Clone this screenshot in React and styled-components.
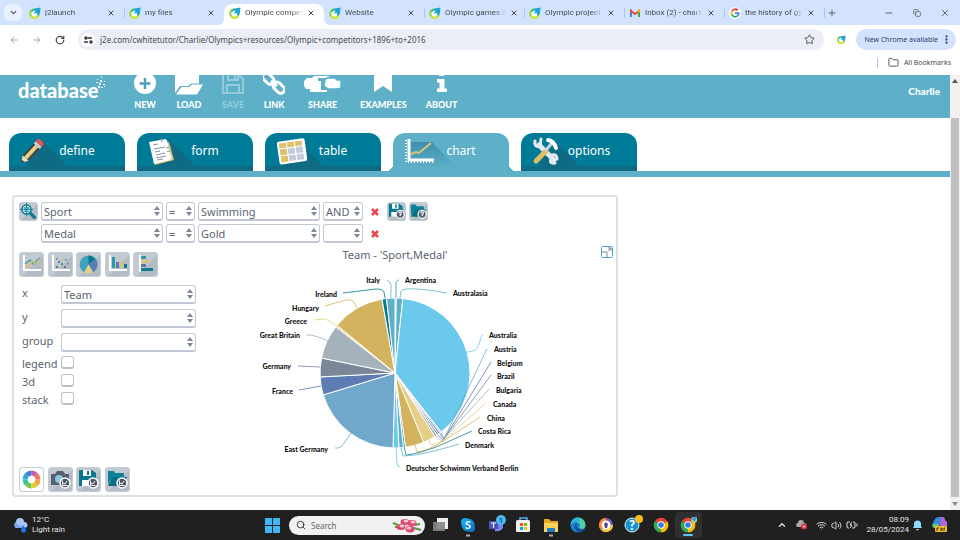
import React from "react";
import styled, { createGlobalStyle } from "styled-components";
import {
  ArrowLeft,
  ArrowRight,
  BatteryCharging,
  ChevronDown,
  ChevronUp,
  Copy,
  EllipsisVertical,
  Folder,
  Minus,
  Plus,
  RotateCw,
  Search,
  Star,
  Volume2,
  Wifi,
  X,
} from "lucide-react";

const ui = `Roboto, "Open Sans", sans-serif`;
const body = `"Noto Sans", "Open Sans", sans-serif`;
const heading = `Lato, "Open Sans", sans-serif`;

const GlobalStyle = createGlobalStyle`
  * { box-sizing: border-box; }
  body { margin: 0; background: #fff; font-family: ${body}; color: #5b6471; }
  button { border: 0; padding: 0; background: none; font: inherit; color: inherit; cursor: pointer; }
  svg { display: block; flex: none; }
`;

const Window = styled.div`
  display: flex;
  flex-direction: column;
  min-height: 100vh;
`;

/* ---------- browser ---------- */

const TabStrip = styled.div`
  display: flex;
  align-items: flex-end;
  height: 25px;
  padding-left: 4px;
  background: #d3e3fd;
  color: #474b50;
  font: 8px ${ui};
`;

const TabSearch = styled.button`
  display: grid;
  place-items: center;
  width: 18px;
  height: 17px;
  margin: 0 2px 4px 0;
  border-radius: 6px;
  background: #e9f1fe;
`;

const BrowserTab = styled.div`
  position: relative;
  display: flex;
  flex: 0 1 100px;
  align-items: center;
  gap: 4px;
  min-width: 0;
  height: 21px;
  padding: 0 9px 4px 5px;
  border-radius: 8px 8px 0 0;
  background: ${(p) => (p.$active ? "#fff" : "transparent")};

  span {
    flex: 1;
    white-space: nowrap;
    mask-image: linear-gradient(90deg, #000 80%, transparent);
  }

  &::before,
  &::after {
    content: "";
    display: ${(p) => (p.$active ? "block" : "none")};
    position: absolute;
    bottom: 0;
    width: 6px;
    height: 6px;
  }
  &::before {
    right: 100%;
    background: radial-gradient(circle at 0 0, transparent 6px, #fff 6px);
  }
  &::after {
    left: 100%;
    background: radial-gradient(circle at 100% 0, transparent 6px, #fff 6px);
  }
`;

const Divider = styled.i`
  width: 1px;
  height: 10px;
  margin: ${(p) => (p.$inBar ? "0 10px 0 0" : "0 -1px 7px 0")};
  background: #a8c7fa;
`;

const WindowButtons = styled.div`
  display: flex;
  gap: 19px;
  align-items: center;
  height: 25px;
  margin-left: ${(p) => (p.$first ? "3px" : "auto")};
  padding-right: 10px;
`;

const AddressBar = styled.div`
  display: flex;
  align-items: center;
  height: 29px;
  padding: 0 4px 0 9px;
  gap: 13px;
  color: #474b50;
`;

const Omnibox = styled.label`
  display: flex;
  flex: 1;
  align-items: center;
  gap: 5px;
  height: 21px;
  padding: 0 9px 0 3px;
  border-radius: 11px;
  background: #eceef7;

  input {
    flex: 1;
    min-width: 0;
    border: 0;
    padding: 0;
    background: none;
    color: #474b50;
    font: 8px ${body};
    outline: none;
  }
`;

const SiteInfo = styled.span`
  display: grid;
  place-items: center;
  width: 14px;
  height: 14px;
  border-radius: 50%;
  background: #fff;
`;

const UpdateButton = styled.button`
  display: flex;
  align-items: center;
  gap: 3px;
  height: 21px;
  margin-left: -3px !important;
  padding: 0 4px 0 8px !important;
  border-radius: 11px;
  background: #d3e3fd !important;
  color: #27406e;
  font: 7px ${body} !important;
  white-space: nowrap;
`;

const BookmarkBar = styled.div`
  display: flex;
  align-items: center;
  justify-content: flex-end;
  height: 21px;
  padding: 0 9px 4px 0;
  font: 7px ${body};
  color: #474b50;

  button {
    display: flex;
    align-items: center;
    gap: 5px;
  }
`;

const Viewport = styled.div`
  display: flex;
  flex: 1;
`;

const Page = styled.div`
  flex: 1;
  min-width: 0;
`;

const Scrollbar = styled.div`
  display: flex;
  flex-direction: column;
  align-items: center;
  width: 10px;
  padding: 4px 0;
  background: #f1f1f1;

  i {
    flex: 1;
    width: 8px;
    margin: 35px 0 5px;
    background: #c1c1c1;
  }
`;

/* ---------- application ---------- */

const AppHeader = styled.header`
  display: flex;
  height: 43px;
  padding: 0 10px 0 18px;
  overflow: hidden;
  background: #5db0c7;
  color: #fff;
`;

const Logo = styled.div`
  display: flex;
  width: 116px;
  height: 30px;
  font: 900 20px/30px ${heading};
`;

const Tools = styled.nav`
  display: flex;
  gap: 19px;
  flex: 1;
`;

const Tool = styled.button`
  display: flex;
  flex-direction: column;
  align-items: center;
  align-self: flex-start;
  gap: 3px;
  font: 900 9px/13px ${heading} !important;
  opacity: ${(p) => (p.disabled ? 0.35 : 1)};
`;

const UserName = styled.span`
  font: 900 10px/32px ${heading};
`;

const Tabs = styled.nav`
  display: flex;
  gap: 12px;
  padding: 15px 9px 0;
  border-bottom: 6px solid #5db0c7;
`;

const Tab = styled.button`
  position: relative;
  display: grid;
  width: 116px;
  height: 38px;
  border-radius: 12px 12px 0 0;
  background: ${(p) =>
    p.$active
      ? "#5db0c7"
      : "linear-gradient(#007b97 33px, #0f6b83 33px)"} !important;
  color: #fff;
  font: 12px/36px ${body} !important;

  > * {
    grid-area: 1 / 1;
  }

  > span {
    padding-left: 20px;
  }

  /* flared feet that join the open tab to the stripe */
  &::before,
  &::after {
    content: "";
    display: ${(p) => (p.$active ? "block" : "none")};
    position: absolute;
    bottom: 0;
    width: 7px;
    height: 7px;
  }
  &::before {
    right: 100%;
    background: radial-gradient(circle at 0 0, transparent 7px, #5db0c7 7px);
  }
  &::after {
    left: 100%;
    background: radial-gradient(circle at 100% 0, transparent 7px, #5db0c7 7px);
  }
`;

const Panel = styled.main`
  display: flex;
  flex-direction: column;
  gap: 3px;
  width: 606px;
  max-width: calc(100% - 26px);
  min-height: 302px;
  margin: 18px 12px 13px;
  padding: 5px 3px 3px 5px;
  border: 2px solid #dce1e8;
  border-radius: 4px;
`;

const FilterRow = styled.div`
  display: flex;
  align-items: center;
  gap: 3px;
  padding-left: ${(p) => (p.$indent ? 22 : 0)}px;
`;

const SelectBox = styled.span`
  display: flex;
  align-items: center;
  width: ${(p) => p.$width}px;
  height: 19px;
  border: 1px solid #c3c9d2;
  border-bottom-width: 2px;
  border-radius: 3px;
  background: #fff;

  select {
    flex: 1;
    min-width: 0;
    height: 100%;
    border: 0;
    padding: 0 0 0 2px;
    appearance: none;
    background: none;
    color: #5b6471;
    font: 11px ${body};
    outline: none;
  }

  svg {
    margin-right: 2px;
    pointer-events: none;
  }
`;

const Remove = styled.button`
  display: grid;
  place-items: center;
  width: 18px;
  height: 18px;
`;

const Tile = styled.button`
  display: grid;
  place-items: center;
  width: ${(p) => p.$size || 25}px;
  height: ${(p) => p.$size || 25}px;
  border-radius: 4px;
  background: ${(p) =>
    p.$plain
      ? "#fff"
      : "linear-gradient(135deg, #c3c9d1 55%, #b3bbc6 55%)"} !important;
  box-shadow: inset 0 0 0 1px #c6ccd4;
`;

const TileRow = styled.div`
  display: flex;
  justify-content: space-between;
  width: ${(p) => p.$width}px;
`;

const Workspace = styled.div`
  display: flex;
  flex: 1;
  align-items: stretch;
`;

const Settings = styled.form`
  display: flex;
  flex-direction: column;
  justify-content: space-between;
  width: 177px;
  padding-top: 6px;
`;

const Fields = styled.div`
  display: grid;
  grid-template-columns: 39px 1fr;
  row-gap: 5px;
  padding: 8px 0 0 3px;
  font-size: 11px;
  line-height: 15px;
`;

const Checks = styled(Fields)`
  row-gap: 3px;
  padding-top: 4px;
`;

const Check = styled.input`
  appearance: none;
  width: 13px;
  height: 13px;
  margin: 0;
  border: 1px solid #bac1cb;
  border-width: 1px 1px 2px;
  border-radius: 3px;
`;

const Figure = styled.figure`
  width: 300px;
  margin: 0 0 0 49px;

  figcaption {
    font-size: 11px;
    line-height: 18px;
    text-align: center;
  }
`;

const Expand = styled.button`
  align-self: flex-start;
  margin-left: auto !important;
`;

/* ---------- taskbar ---------- */

const Taskbar = styled.footer`
  display: flex;
  align-items: center;
  height: 30px;
  padding: 0 12px;
  background: #202020;
  color: #e4e4e4;
  font: 8px/10px ${ui};
`;

const Weather = styled.div`
  display: flex;
  flex: 0 1 253px;
  align-items: center;
  gap: 4px;
`;

const SearchBox = styled.label`
  display: flex;
  align-items: center;
  gap: 5px;
  width: 136px;
  height: 19px;
  margin: 0 2px 0 9px;
  padding: 0 3px 0 7px;
  border-radius: 10px;
  background: #f1f1f1;
  color: #222;

  input {
    flex: 1;
    min-width: 0;
    border: 0;
    padding: 0;
    background: none;
    font: 8px ${body};
    outline: none;
  }
  input::placeholder {
    color: #666;
  }
`;

const Apps = styled.div`
  display: flex;
  width: 275px;
`;

const AppButton = styled.button`
  display: grid;
  flex: 1;
  place-items: center;
  height: 26px;
  border-radius: 4px;
  background: ${(p) => (p.$active ? "#303030" : "none")} !important;
`;

const Tray = styled.div`
  display: flex;
  align-items: center;
  gap: 4px;
  margin-left: auto;

  time {
    text-align: right;
    margin-left: 4px;
  }
`;

/* ---------- small drawings ---------- */

const JIcon = ({ size = 12 }) => (
  <svg width={size} height={size} viewBox="0 0 12 12">
    <circle cx="5.5" cy="6.5" r="4.2" fill="#fff" stroke="#8ed32b" strokeWidth="2" />
    <path d="M2 9.5A4.2 4.2 0 0 0 9 9" fill="none" stroke="#d6e53a" strokeWidth="2" />
    <path d="M3 3 6 1.5 11.5.5 11 6 9 9 7.5 6 4.5 6.5 6.5 4Z" fill="#1fa5dc" />
    <path d="M1 4 5 2 4 5Z" fill="#3dbd8f" />
  </svg>
);

const GmailIcon = () => (
  <svg width="12" height="12" viewBox="0 0 12 12">
    <path d="M1 2.5h2V10H1Z" fill="#4285f4" />
    <path d="M9 2.5h2V10H9Z" fill="#34a853" />
    <path d="m1 2 5 4 5-4v2.5L6 8.3 1 4.5Z" fill="#ea4335" />
    <path d="M9 3.6 11 2v2.5L9 6Z" fill="#fbbc04" />
  </svg>
);

const GoogleIcon = () => (
  <svg width="12" height="12" viewBox="0 0 12 12">
    <circle cx="6" cy="6" r="6" fill="#fff" />
    <g fill="none" strokeWidth="1.8">
      <path d="M8.8 3.4A3.7 3.7 0 0 0 2.7 4.5" stroke="#ea4335" />
      <path d="M2.7 4.5a3.7 3.7 0 0 0 0 3" stroke="#fbbc04" />
      <path d="M2.7 7.5a3.7 3.7 0 0 0 5.8 1.4" stroke="#34a853" />
      <path d="M8.5 8.9A3.7 3.7 0 0 0 9.7 6.2H6" stroke="#4285f4" />
    </g>
  </svg>
);

const Arrows = () => (
  <svg width="6" height="12" viewBox="0 0 6 12" fill="#7d8795">
    <path d="M3 1 6 5H0ZM0 7h6l-3 4Z" />
  </svg>
);

const toolIcons = {
  NEW: (
    <svg width="22" height="20" viewBox="0 0 22 20">
      <circle cx="11" cy="8" r="11" fill="#fff" />
      <path d="M11 3v11M5.5 8.5h11" stroke="#4f9fb6" strokeWidth="2.5" />
    </svg>
  ),
  LOAD: (
    <svg width="28" height="20" viewBox="0 0 28 20" fill="#fff">
      <path d="M0 0h24v8.5h-8l-3 2.5H5L0 18Z" />
      <path d="M1 19.5 6.5 12H14l3-2.5h11L22 19.5Z" />
    </svg>
  ),
  SAVE: (
    <svg width="22" height="20" viewBox="0 0 22 20" fill="none" stroke="#fff" strokeWidth="2">
      <path d="M1 0v18h20V4l-4-4M5 18v-8h12v8M6 0v5h10V0M13 0v4" />
    </svg>
  ),
  LINK: (
    <svg width="22" height="20" viewBox="0 0 22 20" fill="none" stroke="#fff" strokeWidth="3">
      <rect x="-1" y="0" width="13" height="7.5" rx="3.7" transform="rotate(45 5.5 3.5)" />
      <rect x="9.5" y="9" width="13" height="7.5" rx="3.7" transform="rotate(45 16 12.5)" />
      <path d="m8 6 6 5" />
    </svg>
  ),
  SHARE: (
    <svg width="37" height="20" viewBox="0 0 37 20" fill="#fff">
      <path d="M0 6 3 3h5l2-2h16l-4 2h-8v3h3v9h6v2H6v-3H2l-2-3Z" />
      <path d="M23 3h8l2 2h4v8l-4 1h-9l-4-3 1-6Z" stroke="#5db0c7" strokeWidth="1.5" />
    </svg>
  ),
  EXAMPLES: (
    <svg width="18" height="20" viewBox="0 0 18 20" fill="#fff">
      <path d="M0 0h18v17l-9-6-9 6Z" />
    </svg>
  ),
  ABOUT: (
    <svg width="10" height="20" viewBox="0 0 10 20" fill="#fff">
      <path d="M2 0h5v1H2ZM0 4h7.5v9.5H10V17H0v-3.5h2.5V7.5H0Z" />
    </svg>
  ),
};

const TabArt = ({ children, fade }) => (
  <svg width="116" height="38" viewBox="0 0 116 38">
    <defs>
      <linearGradient id="fade" x1="0" y1="0" x2="0" y2="1">
        <stop offset="0" stopColor="#3e8fad" />
        <stop offset="1" stopColor="#5db0c7" />
      </linearGradient>
    </defs>
    <path
      d={fade ? "M15 9h24l25 26H29L14 25Z" : "M35 9 63 38H24L18 30Z"}
      fill={fade ? "url(#fade)" : "#0f6b83"}
    />
    {children}
  </svg>
);

const tabs = [
  {
    label: "define",
    art: (
      <g transform="translate(12 30) rotate(-47)">
        <path d="M0 0 7-4v8Z" fill="#f4ddb4" />
        <path d="M0 0 3-2v4Z" fill="#333" />
        <path d="M7-4h17v3H7Z" fill="#3d3d45" />
        <path d="M7-2h17v4H7Z" fill="#ead083" />
        <path d="M7 2h17v2H7Z" fill="#4b4340" />
        <path d="M23-4h3v8h-3Z" fill="#c7ccd2" />
        <path d="M26-4h3q3 4 0 8h-3Z" fill="#e95159" />
      </g>
    ),
  },
  {
    label: "form",
    art: (
      <g>
        <path d="m18 12 14-3 5 18-19 5Z" fill="#ddbd69" />
        <path d="m15 10 15-3 5 19-16 4Z" fill="#e8edf2" />
        <path d="m12 9 17-3 5 21-17 4Z" fill="#fff" />
        <path
          d="m16 12 5-1m-4 5 11-2m-10 5 5-1m-4 4 9-2m-9 5 10-2m-9 4 6-1m3-11 3-.5m-2 4 3-.5M24 5l1 4"
          stroke="#84929f"
        />
      </g>
    ),
  },
  {
    label: "table",
    art: (
      <g transform="rotate(-8 26 18)">
        <rect x="13" y="7" width="28" height="23" rx="2" fill="#fff" />
        <path d="M15 9h7v5h-7Zm8 0h7v5h-7Zm8 0h7v5h-7ZM15 15h7v6h-7Zm0 7h7v6h-7Z" fill="#dfc06b" />
        <path d="M23 15h7v6h-7Zm8 0h7v6h-7Zm-8 7h7v6h-7Zm8 0h7v6h-7Z" fill="#c4ccd9" />
      </g>
    ),
  },
  {
    label: "chart",
    active: true,
    art: (
      <g fill="none">
        <path d="M16 6v21h25" stroke="#fff" strokeWidth="3" />
        <path d="M13 7v22h28" stroke="#fff" strokeWidth="2" strokeDasharray="1 2" />
        <path d="m18 21 5-2 3 1 12-10" stroke="#dfc478" strokeWidth="2" />
      </g>
    ),
  },
  {
    label: "options",
    art: (
      <g fill="none" strokeLinecap="round">
        <path d="m18 12 15 15" stroke="#e3eaf2" strokeWidth="5" />
        <path d="M14 8q-1 7 6 5-1-3 0-7M30 26q-2 5 4 4m-3-8q5-1 5 4" stroke="#e3eaf2" strokeWidth="3" />
        <path d="M15 28 25 18" stroke="#dfbd62" strokeWidth="5" />
        <path d="m25 17 6-7" stroke="#cdd5df" strokeWidth="3" />
        <path d="M27 7q6 1 8 8" stroke="#fff" strokeWidth="4" />
      </g>
    ),
  },
];

const axes = <path d="M3 1v15h17" fill="none" stroke="#fff" strokeWidth="2" />;

const TileSvg = ({ size = 21, children }) => (
  <svg width={size} height={size} viewBox="0 0 21 21">
    {children}
  </svg>
);

const chartTypes = [
  {
    name: "line chart",
    art: (
      <>
        {axes}
        <path d="m4 10 5-4 3 4 7-6" fill="none" stroke="#2f9db3" strokeWidth="1.5" />
        <path d="m4 13 4-1 3-5 3 3 5-5" fill="none" stroke="#d8bd66" strokeWidth="1.5" />
      </>
    ),
  },
  {
    name: "scatter chart",
    art: (
      <>
        {axes}
        <path d="M6 4h1.5v1.5H6Zm5 5h2v2h-2Zm4-4h1.5v1.5H15Zm-9 7h2v2H6Z" fill="#2a8fa7" />
        <path d="M8 7h2v2H8Zm6 5h2v2h-2Zm3-3h1.5v1.5H17Z" fill="#5c76b0" />
        <path d="M12 5h1.5v1.5H12Zm-2 7h1.5v1.5H10Zm8 1h1.5v1.5H18Z" fill="#d8bd66" />
      </>
    ),
  },
  {
    name: "pie chart",
    art: (
      <>
        <circle cx="10.5" cy="10.5" r="9" fill="#3fa3bd" />
        <path d="M10.5 10.5v-9a9 9 0 0 1 7 3.5Z" fill="#08788f" />
        <path d="m10.5 10.5 7-5.5a9 9 0 0 1-2 13Z" fill="#5a7cb6" />
        <path d="m10.5 10.5 4.5 7.5a9 9 0 0 1-9 .5Z" fill="#e5d083" />
      </>
    ),
  },
  {
    name: "column chart",
    art: (
      <>
        {axes}
        <path d="M5 3h3v11H5Z" fill="#2a96b0" />
        <path d="M9 8h3v6H9Z" fill="#5c76b0" />
        <path d="M13 7h3v7h-3Z" fill="#dcc472" />
        <path d="M17 10h3v4h-3Z" fill="#0b7d95" />
      </>
    ),
  },
  {
    name: "bar chart",
    art: (
      <>
        <path d="M5 1v17" stroke="#fff" strokeWidth="2" />
        <path d="M6 2h5v3H6Z" fill="#2a96b0" />
        <path d="M6 6h8v3H6Z" fill="#dcc472" />
        <path d="M6 10h5v3H6Z" fill="#5c76b0" />
        <path d="M6 14h12v3H6Z" fill="#0b7d95" />
      </>
    ),
  },
];

const badge = (query) => (
  <>
    <circle cx="15" cy="14" r="5" fill="#4b5766" stroke="#fff" strokeWidth="1.5" />
    {query ? (
      <path d="M13.5 13q0-2 1.5-2t1.5 1.5-1.5 2v2" fill="none" stroke="#fff" strokeWidth="1.5" />
    ) : (
      <path d="M12.5 11.5v5h5M13 14l2 1 2-3" fill="none" stroke="#fff" />
    )}
  </>
);

const Disk = ({ query, size }) => (
  <TileSvg size={size}>
    <path d="M1 1h13l4 3v13H1Z" fill="#08788f" />
    <path d="M5 1h8v6H5ZM4 11h11v6H4Z" fill="#fff" />
    <path d="M9 2h2v4H9Z" fill="#08788f" />
    {badge(query)}
  </TileSvg>
);

const OpenFolder = ({ query, size }) => (
  <TileSvg size={size}>
    <path d="M1 2h6l1 2h9v5H5l-4 6Z" fill="#0c8199" />
    <path d="M5 8h15l-4 9H1Z" fill="#086f87" />
    {badge(query)}
  </TileSvg>
);

const ringColours = ["#f0a63c", "#f7764f", "#c35db0", "#4a78d0", "#31a7dc", "#3cbf9c", "#78c74b", "#e3cb3c"];

const exportTools = [
  {
    name: "colours",
    plain: true,
    art: (
      <TileSvg>
        <g fill="none" strokeWidth="5">
          {ringColours.map((colour, i) => (
            <path
              key={colour}
              d="M16.9 10.5a6.4 6.4 0 0 1-1.9 4.6"
              stroke={colour}
              transform={`rotate(${i * -45} 10.5 10.5)`}
            />
          ))}
        </g>
      </TileSvg>
    ),
  },
  {
    name: "take picture",
    art: (
      <TileSvg>
        <path d="M1 5h4l2-3h6l2 3h4v11H1Z" fill="#566170" />
        <circle cx="9" cy="10" r="4" fill="#8cc7df" />
        {badge()}
      </TileSvg>
    ),
  },
  { name: "save chart", art: <Disk /> },
  { name: "open chart", art: <OpenFolder /> },
];

/* ---------- pie chart ---------- */

// from/to are degrees clockwise from twelve o'clock, the pie centre is 0,0
const slices = [
  { name: "Argentina", from: 0, to: 1, fill: "#2f97a8", x: 10, y: -92, line: "M1-75V-88Q1-93 4-93" },
  { name: "Australasia", from: 1, to: 6, fill: "#5db0c7", x: 58, y: -79, line: "M5-75 6-82Q7-84 12-84 25-85 52-80" },
  { name: "Australia", from: 6, to: 142, fill: "#6bc9ec", x: 94, y: -37, line: "M72-21C82-22 83-25 85-32Q86-38 88-38" },
  { name: "Austria", from: 142, to: 143, fill: "#6fa8ca", x: 99, y: -23, line: "M46 60 49 66 92-24" },
  { name: "Belgium", from: 143, to: 144.5, fill: "#5d7cb3", x: 102, y: -9, line: "M45 61 49 66 96-11" },
  { name: "Brazil", from: 144.5, to: 146, fill: "#7b8699", x: 102, y: 4, line: "M43 62 48 67 96 2" },
  { name: "Bulgaria", from: 146, to: 148, fill: "#a5b1bb", x: 101, y: 18, line: "M41 63 47 68 94 16" },
  { name: "Canada", from: 148, to: 157.5, fill: "#e5cf87", x: 98, y: 32, line: "M34 67 36 72 48 68 91 30" },
  { name: "China", from: 157.5, to: 172, fill: "#d3b35d", x: 92, y: 46, line: "M20 72 22 79Q35 77 50 67L85 44" },
  { name: "Costa Rica", from: 172, to: 173.5, fill: "#218393", x: 83, y: 59, line: "M9 74 11 82Q28 80 48 71L77 58" },
  { name: "Denmark", from: 173.5, to: 177, fill: "#5db0c7", x: 70, y: 73, line: "M6 75 8 83Q25 83 64 71" },
  {
    name: "Deutscher Schwimm Verband Berlin",
    from: 177,
    to: 181.5,
    fill: "#6bc9ec",
    x: 11,
    y: 96,
    line: "M1 75 2 90Q2 94 5 94",
  },
  { name: "East Germany", from: 181.5, to: 253, fill: "#6fa8ca", x: -67, y: 77, line: "M-44 60-51 70Q-54 76-60 75" },
  { name: "France", from: 253, to: 267, fill: "#5d7cb3", x: -102, y: 19, line: "M-74 13-96 17" },
  { name: "Germany", from: 267, to: 281.5, fill: "#7b8699", x: -104, y: -6, line: "M-75-6-97-7" },
  { name: "Great Britain", from: 281.5, to: 308, fill: "#a5b1bb", x: -95, y: -37, line: "M-67-32Q-82-39-89-38" },
  { name: "Greece", from: 308, to: 309.5, fill: "#e5cf87", x: -88, y: -51, line: "M-58-47Q-67-54-72-54L-81-53" },
  { name: "Hungary", from: 309.5, to: 350, fill: "#d3b35d", x: -76, y: -64, line: "M-38-65-41-71Q-43-74-49-73L-70-67" },
  { name: "Ireland", from: 350, to: 353.5, fill: "#087b92", x: -58, y: -78, line: "M-10-75-11-81Q-12-84-19-84L-52-80" },
  { name: "Italy", from: 353.5, to: 360, fill: "#5db0c7", x: -15, y: -92, line: "M-4-75V-88Q-5-92-8-93" },
];

const radius = 75;
const edge = (deg) => {
  const a = (deg * Math.PI) / 180;
  return `${radius * Math.sin(a)} ${-radius * Math.cos(a)}`;
};

const Leader = styled.path`
  fill: none;
  stroke-width: 1;
  opacity: 0.8;
`;

const SliceLabel = styled.text`
  fill: #111;
  font: 900 7px ${heading};
`;

const Pie = () => (
  <svg width="300" height="216" viewBox="-150 -109 300 216" role="img" aria-label="Gold swimming medals by team">
    {slices.map((s) => (
      <path
        key={s.name}
        d={`M0 0 ${edge(s.from)}A${radius} ${radius} 0 ${s.to - s.from > 180 ? 1 : 0} 1 ${edge(s.to)}Z`}
        fill={s.fill}
        stroke="#fff"
        strokeWidth="1"
      />
    ))}
    {slices.map((s) => (
      <g key={s.name}>
        <Leader d={s.line} stroke={s.fill} />
        <SliceLabel x={s.x} y={s.y} dy="2" textAnchor={s.x < 0 ? "end" : "start"}>
          {s.name}
        </SliceLabel>
      </g>
    ))}
  </svg>
);

/* ---------- taskbar drawings ---------- */

const ChromeIcon = ({ badge: withBadge }) => (
  <svg width="20" height="22" viewBox="-10 -11 20 22">
    <path d="M0 0-6.3-3.7A7.3 7.3 0 0 1 6.3-3.7Z" fill="#ea4335" />
    <path d="M0 0 6.3-3.7A7.3 7.3 0 0 1 0 7.3Z" fill="#fbbc04" />
    <path d="M0 0 0 7.3A7.3 7.3 0 0 1-6.3-3.7Z" fill="#34a853" />
    <circle r="3.7" fill="#fff" />
    <circle r="2.8" fill="#2f7de9" />
    {withBadge && (
      <>
        <circle cx="6" cy="-5" r="3" fill="#b5dc84" />
        <path d="m3-6 6-3-2 6Z" fill="#25a8db" />
        <rect x="-5" y="9" width="10" height="2" rx="1" fill="#5cc3f5" />
      </>
    )}
  </svg>
);

const AppSvg = ({ children }) => (
  <svg width="22" height="24" viewBox="-11 -12 22 24">
    {children}
  </svg>
);

const apps = [
  {
    name: "Task view",
    art: (
      <AppSvg>
        <path d="M-4-7H7V4H-4Z" fill="#eee" />
        <path d="M-8-3H4V6H-8Z" fill="#858585" opacity=".9" />
      </AppSvg>
    ),
  },
  {
    name: "Skype",
    art: (
      <AppSvg>
        <circle r="6.5" fill="#0f93dc" />
        <circle cx="-3" cy="-3" r="4" fill="#17a6e8" />
        <circle cx="3" cy="3" r="4" fill="#0879cd" />
        <text y="4" textAnchor="middle" fontSize="11" fontWeight="700" fontFamily="Lato" fill="#fff">
          S
        </text>
        <path d="M-2 10.5H2" stroke="#aaa" strokeWidth="2" />
      </AppSvg>
    ),
  },
  {
    name: "Teams",
    art: (
      <AppSvg>
        <path d="M-2-3H7V3Q4 7-1 6Z" fill="#7b83eb" />
        <path d="M-7-4H2V4H-7Z" fill="#4b53bc" />
        <path d="M-5-2H0M-2.5-2V3" stroke="#fff" />
        <circle cx="5" cy="-5" r="5" fill="#4cb8f2" />
        <text x="5" y="-2" textAnchor="middle" fontSize="8" fontFamily="Open Sans" fill="#111">
          1
        </text>
      </AppSvg>
    ),
  },
  {
    name: "Store",
    art: (
      <AppSvg>
        <path d="M-3-4V-7H4V-4" fill="none" stroke="#4bb4ea" strokeWidth="1.5" />
        <rect x="-7" y="-5" width="14" height="12" rx="1.5" fill="#f2f2f2" />
        <path d="M-3-2H0V1H-3Z" fill="#f25022" />
        <path d="M1-2H4V1H1Z" fill="#7fba00" />
        <path d="M-3 2H0V5H-3Z" fill="#00a4ef" />
        <path d="M1 2H4V5H1Z" fill="#ffb900" />
      </AppSvg>
    ),
  },
  {
    name: "File explorer",
    art: (
      <AppSvg>
        <path d="M-7-6H-2L0-4H7V6H-7Z" fill="#e8a91f" />
        <path d="M-7-2H7V7H-7Z" fill="#fdd25b" />
        <path d="M-4 3H4V7H-4Z" fill="#1d7fc8" />
        <path d="M-2 10.5H2" stroke="#aaa" strokeWidth="2" />
      </AppSvg>
    ),
  },
  {
    name: "Edge",
    art: (
      <AppSvg>
        <circle r="7.5" fill="#1b86d0" />
        <path d="M-7.5 0A7.5 7.5 0 0 1 7.5 0Q7.5 4 3 4 0 3 2 1 2-3-2-3-6-3-7.5 0Z" fill="#4fd0a0" />
        <path d="M-7.5 0A7.5 7.5 0 0 1 0-7.5Q3-5 1-3-5-4-7.5 0Z" fill="#2fb4dd" />
        <path d="M-3-1Q-5 5 1 7.4 5 7 7 4 1 5-1 2-2 0-1-2Z" fill="#0f539c" />
      </AppSvg>
    ),
  },
  {
    name: "Privacy browser",
    art: (
      <AppSvg>
        <circle r="7" fill="#7857c9" />
        <path d="M0-7A7 7 0 0 0-5 5L0 0Z" fill="#f58a2c" />
        <path d="M-5 5A7 7 0 0 0 7 0L0 0Z" fill="#f9c53a" />
        <circle r="4.5" fill="#fff" />
        <path d="M0-3 2-1 1 3H-1L-2-1Z" fill="#58418f" />
      </AppSvg>
    ),
  },
  {
    name: "Help",
    art: (
      <AppSvg>
        <circle r="7" cx="-1" fill="#1695cd" stroke="#e5f5fb" />
        <text x="-1" y="5" textAnchor="middle" fontSize="13" fontWeight="900" fontFamily="Lato" fill="#fff">
          ?
        </text>
        <circle cx="6" cy="-6" r="4" fill="#fbbc1c" />
      </AppSvg>
    ),
  },
  { name: "Chrome", art: <ChromeIcon /> },
  { name: "Chrome, j2e", active: true, art: <ChromeIcon badge /> },
];

const Tulips = () => (
  <svg width="30" height="17" viewBox="0 0 30 17">
    <path d="m1 6 5 2M3 10l5 0M22 8l6-1M22 11l7 2" stroke="#4d9c3a" strokeWidth="2" />
    <g fill="#dd4470">
      <ellipse cx="9" cy="10" rx="4.5" ry="3" />
      <ellipse cx="13" cy="5" rx="4.5" ry="3" />
      <ellipse cx="18" cy="12" rx="4.5" ry="3.5" />
      <ellipse cx="20" cy="6" rx="4.5" ry="3" />
    </g>
    <g fill="#f7c3cf">
      <ellipse cx="10" cy="9" rx="2.5" ry="1.5" />
      <ellipse cx="14" cy="4" rx="2.5" ry="1.5" />
      <ellipse cx="17" cy="11" rx="2.5" ry="1.5" />
      <ellipse cx="21" cy="5" rx="2.5" ry="1.5" />
    </g>
  </svg>
);

const browserTabs = [
  ["j2launch"],
  ["my files"],
  ["Olympic compet", true],
  ["Website"],
  ["Olympic games a"],
  ["Olympic project"],
  ["Inbox (2) - charli"],
  ["the history of gy"],
];

const Filter = ({ first, field, value, join }) => (
  <FilterRow $indent={!first}>
    {first && (
      <Tile $size={19} aria-label="search">
        <TileSvg size={17}>
          <path d="m12 12 7 7" stroke="#08788f" strokeWidth="4" />
          <circle cx="8" cy="8" r="5.5" fill="#fff" stroke="#08788f" strokeWidth="2" />
          <path d="M8 0v16M0 8h16M5 6h6M5 10h6" stroke="#1f8ba1" strokeWidth="1.5" />
        </TileSvg>
      </Tile>
    )}
    {[
      ["field", field, 122],
      ["comparison", "=", 29],
      ["value", value, 122],
      ["join", join, 40],
    ].map(([name, text, width]) => (
      <SelectBox key={name} $width={width}>
        <select aria-label={name}>
          <option>{text}</option>
        </select>
        <Arrows />
      </SelectBox>
    ))}
    <Remove aria-label="remove">
      <svg width="8" height="8" viewBox="0 0 8 8">
        <path d="m1 1 6 6m0-6L1 7" stroke="#e9494d" strokeWidth="2.5" />
      </svg>
    </Remove>
    {first && (
      <>
        <Tile $size={19} aria-label="save query">
          <Disk query size={17} />
        </Tile>
        <Tile $size={19} aria-label="open query">
          <OpenFolder query size={17} />
        </Tile>
      </>
    )}
  </FilterRow>
);

export default function App() {
  return (
    <Window>
      <GlobalStyle />

      <TabStrip>
        <TabSearch aria-label="search tabs">
          <ChevronDown size={9} strokeWidth={3} />
        </TabSearch>
        {browserTabs.map(([title, active], i) => (
          <React.Fragment key={title}>
            <BrowserTab $active={active}>
              {i === 6 ? <GmailIcon /> : i === 7 ? <GoogleIcon /> : <JIcon />}
              <span>{title}</span>
              <X size={8} strokeWidth={3} />
            </BrowserTab>
            {i !== 1 && i !== 2 && <Divider />}
          </React.Fragment>
        ))}
        <WindowButtons $first>
          <Plus size={10} strokeWidth={2} />
        </WindowButtons>
        <WindowButtons>
          <Minus size={10} />
          <Copy size={8} style={{ transform: "scaleX(-1) rotate(90deg)" }} />
          <X size={10} />
        </WindowButtons>
      </TabStrip>

      <AddressBar>
        <ArrowLeft size={10} color="#999" />
        <ArrowRight size={10} color="#999" />
        <RotateCw size={10} strokeWidth={3} />
        <Omnibox>
          <SiteInfo>
            <svg width="9" height="8" viewBox="0 0 9 8" fill="none" stroke="#333" strokeWidth="1.5">
              <path d="M4 2h4M0 6h4" />
              <circle cx="2" cy="2" r="1" />
              <circle cx="7" cy="6" r="1" />
            </svg>
          </SiteInfo>
          <input
            aria-label="address"
            defaultValue="j2e.com/cwhitetutor/Charlie/Olympics+resources/Olympic+competitors+1896+to+2016"
          />
          <Star size={11} strokeWidth={2} />
        </Omnibox>
        <JIcon size={9} />
        <UpdateButton>
          New Chrome available
          <EllipsisVertical size={11} strokeWidth={3} />
        </UpdateButton>
      </AddressBar>

      <BookmarkBar>
        <Divider $inBar />
        <button>
          <Folder size={11} />
          All Bookmarks
        </button>
      </BookmarkBar>

      <Viewport>
        <Page>
          <AppHeader>
            <Logo>
              database
              <svg width="14" height="14" viewBox="0 0 14 14" fill="#fff" style={{ margin: "2px 0 0 -7px" }}>
                <path d="M5 2h1v1H5Zm4-2h1v1H9ZM4 5h2v1H4Zm4-2h2v2H8Zm4 1h1v1h-1ZM7 6h2v2H7Zm4 1h2v1h-2ZM9 10h2v1H9Zm3-1h1v1h-1ZM6 9h2v2H6Z" />
              </svg>
            </Logo>
            <Tools>
              {Object.keys(toolIcons).map((name) => (
                <Tool key={name} disabled={name === "SAVE"}>
                  {toolIcons[name]}
                  {name}
                </Tool>
              ))}
            </Tools>
            <UserName>Charlie</UserName>
          </AppHeader>

          <Tabs>
            {tabs.map((tab) => (
              <Tab key={tab.label} $active={tab.active}>
                <TabArt fade={tab.active}>{tab.art}</TabArt>
                <span>{tab.label}</span>
              </Tab>
            ))}
          </Tabs>

          <Panel>
            <Filter first field="Sport" value="Swimming" join="AND" />
            <Filter field="Medal" value="Gold" join="" />

            <Workspace>
              <Settings>
                <div>
                  <TileRow $width={139}>
                    {chartTypes.map((type) => (
                      <Tile type="button" key={type.name} aria-label={type.name}>
                        <TileSvg>{type.art}</TileSvg>
                      </Tile>
                    ))}
                  </TileRow>
                  <Fields>
                    {[["x", "Team"], ["y", ""], ["group", ""]].map(([name, value]) => (
                      <React.Fragment key={name}>
                        <label htmlFor={name}>{name}</label>
                        <SelectBox $width={135}>
                          <select id={name}>
                            <option>{value}</option>
                          </select>
                          <Arrows />
                        </SelectBox>
                      </React.Fragment>
                    ))}
                  </Fields>
                  <Checks>
                    {["legend", "3d", "stack"].map((name) => (
                      <React.Fragment key={name}>
                        <label htmlFor={name}>{name}</label>
                        <Check type="checkbox" id={name} />
                      </React.Fragment>
                    ))}
                  </Checks>
                </div>
                <TileRow $width={111}>
                  {exportTools.map((tool) => (
                    <Tile type="button" key={tool.name} $plain={tool.plain} aria-label={tool.name}>
                      {tool.art}
                    </Tile>
                  ))}
                </TileRow>
              </Settings>

              <Figure>
                <figcaption>Team - 'Sport,Medal'</figcaption>
                <Pie />
              </Figure>

              <Expand aria-label="expand">
                <svg width="12" height="12" viewBox="0 0 12 12" fill="none">
                  <rect x=".5" y=".5" width="11" height="11" rx="1" stroke="#4ba5bc" />
                  <path d="M1 6h5v5M7 5l3-3M7 2h3v3" stroke="#7b8794" />
                </svg>
              </Expand>
            </Workspace>
          </Panel>
        </Page>

        <Scrollbar>
          <svg width="6" height="4" viewBox="0 0 6 4" fill="#555">
            <path d="m3 0 3 4H0Z" />
          </svg>
          <i />
          <svg width="6" height="4" viewBox="0 0 6 4" fill="#888">
            <path d="M0 0h6L3 4Z" />
          </svg>
        </Scrollbar>
      </Viewport>

      <Taskbar>
        <Weather>
          <svg width="16" height="15" viewBox="0 0 16 15">
            <path d="M4 10a3.5 3.5 0 0 1 0-6 4 4 0 0 1 8 0 3 3 0 0 1 1 6Z" fill="#a9c5f7" />
            <path d="M4 10a3 3 0 0 1 0-5q5 4 9 5Z" fill="#7da4ee" />
            <path d="M11 7q6 7 0 7.5-4-.5 0-7.5Z" fill="#1d76ea" />
          </svg>
          <div>
            12°C
            <br />
            Light rain
          </div>
        </Weather>
        <button aria-label="Start">
          <svg width="15" height="15" viewBox="0 0 15 15" fill="#3fb7f5">
            <path d="M0 0h7v7H0Zm8 0h7v7H8ZM0 8h7v7H0Zm8 0h7v7H8Z" />
          </svg>
        </button>
        <SearchBox>
          <Search size={10} strokeWidth={2} />
          <input placeholder="Search" aria-label="Search" />
          <Tulips />
        </SearchBox>
        <Apps>
          {apps.map((app) => (
            <AppButton key={app.name} $active={app.active} aria-label={app.name}>
              {app.art}
            </AppButton>
          ))}
        </Apps>
        <Tray>
          <ChevronUp size={10} strokeWidth={3} style={{ marginRight: 5 }} />
          <svg width="12" height="10" viewBox="0 0 12 10">
            <path d="M2 7a2 2 0 0 1 0-4 3 3 0 0 1 6 0 2 2 0 0 1 1 4Z" fill="#aaa" />
            <circle cx="8" cy="6.5" r="3" fill="#d92c36" />
            <path d="m7 5.5 2 2m0-2-2 2" stroke="#fff" />
          </svg>
          <Wifi size={11} style={{ marginLeft: 4 }} />
          <Volume2 size={11} />
          <BatteryCharging size={12} />
          <time dateTime="2024-05-28T08:09">
            08:09
            <br />
            28/05/2024
          </time>
          <svg width="9" height="11" viewBox="0 0 9 11" fill="#8edcf8">
            <path d="M0 8 1 6V4a3.5 3.5 0 0 1 7 0v2l1 2ZM3 9h3q-1.5 3-3 0Z" />
          </svg>
          <svg width="16" height="16" viewBox="0 0 16 16" style={{ marginLeft: 6 }}>
            <path d="M3 2q1-2 4-2h3L6 11H3q-3 0-3-3Z" fill="#2e8fe0" />
            <path d="M1 7h6l-1 4H3q-3 0-2-4Z" fill="#6ac86a" />
            <path d="M9 0h2q2 0 2 3l2 2q1 3-1 6H7Z" fill="#b168dd" />
            <rect x="3" y="9" width="12" height="6" rx="1" fill="#f3bd25" />
            <path d="M5 14v-3h2m2 3v-3h1v3m2 0v-3h1" stroke="#3a3010" fill="none" />
          </svg>
        </Tray>
      </Taskbar>
    </Window>
  );
}
